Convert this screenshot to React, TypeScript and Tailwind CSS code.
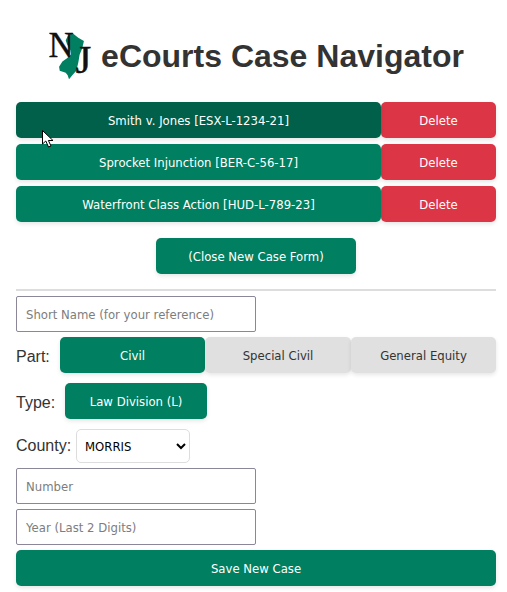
const textFont = "font-['DejaVu_Sans',sans-serif] text-[11.7px]";
const btnFont = `${textFont} pt-[3px]`;
const shadow = 'shadow-[0_2px_4px_rgba(0,0,0,0.1)]';

const cases = [
  { label: 'Smith v. Jones [ESX-L-1234-21]', hover: true },
  { label: 'Sprocket Injunction [BER-C-56-17]', hover: false },
  { label: 'Waterfront Class Action [HUD-L-789-23]', hover: false },
];

function Logo() {
  return (
    <svg viewBox="55 35 135 145" className="h-12 w-[45px] shrink-0 overflow-visible">
      <path
        d="M127 37 L114 48 L108 60 L112 72 L122 90 L124 102 L112 114 L98 124 L88 140 L90 152 L108 158 L114 166 L118 178 L128 166 L140 152 L146 128 L150 104 L158 84 L163 62 L146 52 Z"
        fill="#008060"
      />
      <text x="56" y="112" fontFamily="Liberation Serif" fontSize="105" fill="#111" stroke="#111" strokeWidth="1">N</text>
      <text x="138" y="159" fontFamily="Liberation Serif" fontSize="122" fill="#111" stroke="#111" strokeWidth="1.5">J</text>
    </svg>
  );
}

function Cursor() {
  return (
    <svg viewBox="0 0 12 18" className="absolute left-[26px] top-[28px] h-[18px] w-3">
      <path d="M0.5 0.5 L0.5 14 L3.8 11 L6.5 17 L9 16 L6.4 10.5 L11 10.5 Z" fill="#fff" stroke="#000" strokeWidth="1" />
    </svg>
  );
}

function Field({ placeholder }: { placeholder: string }) {
  return (
    <input
      placeholder={placeholder}
      className={`${textFont} block h-9 w-60 rounded-[2px] border border-[#8b8799] bg-white px-[9px] pt-[2px] text-black placeholder:text-[#7d7d7d]`}
    />
  );
}

export default function App() {
  return (
    <div className="min-h-[592px] w-[507px] bg-white pl-4 pr-[11px] pt-8 font-['Liberation_Sans',sans-serif] text-[#333]">
      <div className="flex h-12 items-center justify-center">
        <Logo />
        <h1 className="ml-2 text-[32px] font-bold text-[#333]">eCourts Case Navigator</h1>
      </div>

      <div className="mt-[22px] flex flex-col gap-1.5">
        {cases.map((c) => (
          <div key={c.label} className={`flex ${c.hover ? 'relative z-10' : ''}`}>
            <button className={`${btnFont} relative h-9 flex-1 rounded-[5px] text-white ${shadow} ${c.hover ? 'bg-[#006049]' : 'bg-[#008060]'}`}>
              {c.label}
              {c.hover && <Cursor />}
            </button>
            <button className={`${btnFont} h-9 w-[115px] rounded-[5px] bg-[#dc3545] text-white ${shadow}`}>
              Delete
            </button>
          </div>
        ))}
      </div>

      <div className="mt-4 flex justify-center">
        <button className={`${btnFont} h-9 w-[200px] rounded-[5px] bg-[#008060] text-white ${shadow}`}>
          (Close New Case Form)
        </button>
      </div>

      <hr className="mt-[15px] h-0.5 border-0 bg-[#dddddd]" />

      <div className="mt-[5px]">
        <Field placeholder="Short Name (for your reference)" />
      </div>

      <div className="mt-[5px] flex items-center">
        <span className="w-11 pt-[3px] text-base">Part:</span>
        <button className={`${btnFont} h-9 w-[145px] rounded-[5px] bg-[#008060] text-white ${shadow}`}>Civil</button>
        <button className={`${btnFont} h-9 w-[146px] rounded-[5px] bg-[#e0e0e0] text-[#333] ${shadow}`}>Special Civil</button>
        <button className={`${btnFont} h-9 w-[145px] rounded-[5px] bg-[#e0e0e0] text-[#333] ${shadow}`}>General Equity</button>
      </div>

      <div className="mt-2.5 flex items-center">
        <span className="w-[49px] pt-[3px] text-base">Type:</span>
        <button className={`${btnFont} h-9 w-[142px] rounded-[5px] bg-[#008060] text-white ${shadow}`}>Law Division (L)</button>
      </div>

      <div className="mt-2.5 flex items-center">
        <span className="w-[60px] text-base">County:</span>
        <select defaultValue="MORRIS" className={`${textFont} h-[34px] w-[114px] rounded-[5px] border border-[#dddddd] bg-white pl-1 pt-[2px] text-black`}>
          <option>MORRIS</option>
        </select>
      </div>

      <div className="mt-[5px]">
        <Field placeholder="Number" />
      </div>
      <div className="mt-[5px]">
        <Field placeholder="Year (Last 2 Digits)" />
      </div>

      <button className={`${btnFont} mt-[5px] h-9 w-full rounded-[5px] bg-[#008060] text-white ${shadow}`}>
        Save New Case
      </button>
    </div>
  );
}
